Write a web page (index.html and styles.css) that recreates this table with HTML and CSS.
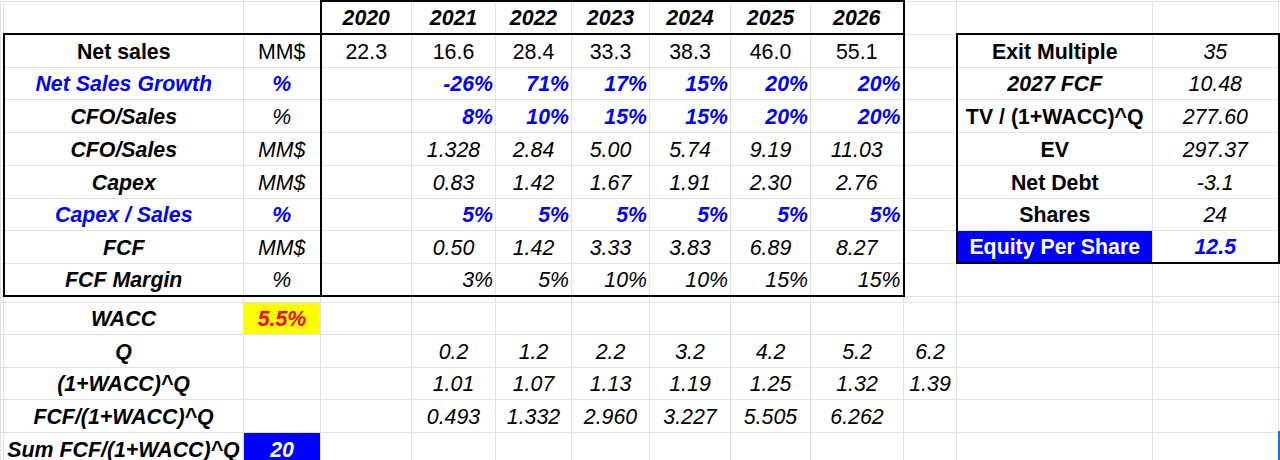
FILE: index.html
```html
<!DOCTYPE html>
<html lang="en">
<head>
<meta charset="utf-8">
<title>DCF</title>
<link rel="stylesheet" href="styles.css">
</head>
<body>
<table class="sheet">
<colgroup>
<col class="w-edge"><col class="w-label"><col class="w-unit"><col class="w-2020"><col class="w-2021"><col class="w-2022"><col class="w-2023"><col class="w-2024"><col class="w-2025"><col class="w-2026"><col class="w-gap"><col class="w-key"><col class="w-val"><col class="w-edge2">
</colgroup>
<tbody>
<tr class="r33">
<td></td><td class="bb"></td><td class="bb"></td>
<td class="bt bl bb bi">2020</td><td class="bt bb bi">2021</td><td class="bt bb bi">2022</td><td class="bt bb bi">2023</td><td class="bt bb bi">2024</td><td class="bt bb bi">2025</td><td class="bt br bb bi">2026</td>
<td></td><td></td><td></td><td></td>
</tr>
<tr class="r33">
<td></td><td class="bl b">Net sales</td><td>MM$</td>
<td class="bl">22.3</td><td>16.6</td><td>28.4</td><td>33.3</td><td>38.3</td><td>46.0</td><td class="br">55.1</td>
<td></td><td class="bl bt b">Exit Multiple</td><td class="br bt i">35</td><td></td>
</tr>
<tr class="r32">
<td></td><td class="bl bi blue">Net Sales Growth</td><td class="bi blue">%</td>
<td class="bl"></td><td class="bi blue num-r">-26%</td><td class="bi blue num-r">71%</td><td class="bi blue num-r">17%</td><td class="bi blue num-r">15%</td><td class="bi blue num-r">20%</td><td class="br bi blue num-r">20%</td>
<td></td><td class="bl bi">2027 FCF</td><td class="br i">10.48</td><td></td>
</tr>
<tr class="r33">
<td></td><td class="bl bi">CFO/Sales</td><td class="i">%</td>
<td class="bl"></td><td class="bi blue num-r">8%</td><td class="bi blue num-r">10%</td><td class="bi blue num-r">15%</td><td class="bi blue num-r">15%</td><td class="bi blue num-r">20%</td><td class="br bi blue num-r">20%</td>
<td></td><td class="bl b">TV / (1+WACC)^Q</td><td class="br i">277.60</td><td></td>
</tr>
<tr class="r33">
<td></td><td class="bl bi">CFO/Sales</td><td class="i">MM$</td>
<td class="bl"></td><td class="i">1.328</td><td class="i">2.84</td><td class="i">5.00</td><td class="i">5.74</td><td class="i">9.19</td><td class="br i">11.03</td>
<td></td><td class="bl b">EV</td><td class="br i">297.37</td><td></td>
</tr>
<tr class="r33">
<td></td><td class="bl bi">Capex</td><td class="i">MM$</td>
<td class="bl"></td><td class="i">0.83</td><td class="i">1.42</td><td class="i">1.67</td><td class="i">1.91</td><td class="i">2.30</td><td class="br i">2.76</td>
<td></td><td class="bl b">Net Debt</td><td class="br i">-3.1</td><td></td>
</tr>
<tr class="r32">
<td></td><td class="bl bi blue">Capex / Sales</td><td class="bi blue">%</td>
<td class="bl"></td><td class="bi blue num-r">5%</td><td class="bi blue num-r">5%</td><td class="bi blue num-r">5%</td><td class="bi blue num-r">5%</td><td class="bi blue num-r">5%</td><td class="br bi blue num-r">5%</td>
<td></td><td class="bl b">Shares</td><td class="br i">24</td><td></td>
</tr>
<tr class="r33">
<td></td><td class="bl bi">FCF</td><td class="i">MM$</td>
<td class="bl"></td><td class="i">0.50</td><td class="i">1.42</td><td class="i">3.33</td><td class="i">3.83</td><td class="i">6.89</td><td class="br i">8.27</td>
<td></td><td class="bl bb b fill-blue">Equity Per Share</td><td class="br bb bi blue">12.5</td><td></td>
</tr>
<tr class="r33">
<td></td><td class="bl bb bi">FCF Margin</td><td class="bb i">%</td>
<td class="bl bb"></td><td class="bb i num-r">3%</td><td class="bb i num-r">5%</td><td class="bb i num-r">10%</td><td class="bb i num-r">10%</td><td class="bb i num-r">15%</td><td class="br bb i num-r">15%</td>
<td></td><td></td><td></td><td></td>
</tr>
<tr class="r6">
<td></td><td></td><td></td><td></td><td></td><td></td><td></td><td></td><td></td><td></td><td></td><td></td><td></td><td></td>
</tr>
<tr class="r32">
<td></td><td class="bi">WACC</td><td class="bi red fill-yellow">5.5%</td>
<td></td><td></td><td></td><td></td><td></td><td></td><td></td><td></td><td></td><td></td><td></td>
</tr>
<tr class="r33">
<td></td><td class="bi">Q</td><td></td>
<td></td><td class="i">0.2</td><td class="i">1.2</td><td class="i">2.2</td><td class="i">3.2</td><td class="i">4.2</td><td class="i">5.2</td><td class="i">6.2</td><td></td><td></td><td></td>
</tr>
<tr class="r32">
<td></td><td class="bi">(1+WACC)^Q</td><td></td>
<td></td><td class="i">1.01</td><td class="i">1.07</td><td class="i">1.13</td><td class="i">1.19</td><td class="i">1.25</td><td class="i">1.32</td><td class="i">1.39</td><td></td><td></td><td></td>
</tr>
<tr class="r33">
<td></td><td class="bi">FCF/(1+WACC)^Q</td><td></td>
<td></td><td class="i">0.493</td><td class="i">1.332</td><td class="i">2.960</td><td class="i">3.227</td><td class="i">5.505</td><td class="i">6.262</td><td></td><td></td><td></td><td></td>
</tr>
<tr class="r33">
<td></td><td class="bi">Sum FCF/(1+WACC)^Q</td><td class="bi fill-blue">20</td>
<td></td><td></td><td></td><td></td><td></td><td></td><td></td><td></td><td></td><td></td><td class="selected"></td>
</tr>
</tbody>
</table>
</body>
</html>
```

FILE: styles.css
```css
html, body {
  margin: 0;
  padding: 0;
  background: #ffffff;
}

body {
  width: 1280px;
  height: 460px;
  overflow: hidden;
  font-family: "Liberation Sans", Arial, sans-serif;
  font-size: 16pt;
  color: #000000;
}

.sheet {
  border-collapse: collapse;
  table-layout: fixed;
  width: 1288px;
}

.sheet td {
  border: 1px solid #e2e2e2;
  padding: 0 3px 3px;
  vertical-align: bottom;
  text-align: center;
  white-space: nowrap;
  overflow: visible;
  line-height: 24px;
}

.w-edge { width: 3px; }
.w-label { width: 240px; }
.w-unit { width: 77px; }
.w-2020 { width: 91px; }
.w-2021 { width: 84px; }
.w-2022 { width: 76px; }
.w-2023 { width: 78px; }
.w-2024 { width: 81px; }
.w-2025 { width: 80px; }
.w-2026 { width: 93px; }
.w-gap { width: 53px; }
.w-key { width: 196px; }
.w-val { width: 126px; }
.w-edge2 { width: 10px; }

.r33 { height: 33px; }
.r32 { height: 32px; }
.r6 { height: 6px; }
.sheet .r6 td { padding: 0; line-height: 0; }

.sheet td.bt { border-top: 2px solid #000; }
.sheet td.bb { border-bottom: 2px solid #000; }
.sheet td.bl { border-left: 2px solid #000; }
.sheet td.br { border-right: 2px solid #000; }

.b { font-weight: bold; }
.i { font-style: italic; }
.bi { font-weight: bold; font-style: italic; }

.blue { color: #0000ff; }
.red { color: #ff0000; }

.sheet td.num-r { text-align: right; padding-right: 2px; }

.fill-yellow { background: #ffff00; }
.sheet td.fill-blue { background: #0000ff; color: #ffffff; }

.sheet td.selected { border-left: 2px solid #1a73e8; border-top: 2px solid #1a73e8; }
```
